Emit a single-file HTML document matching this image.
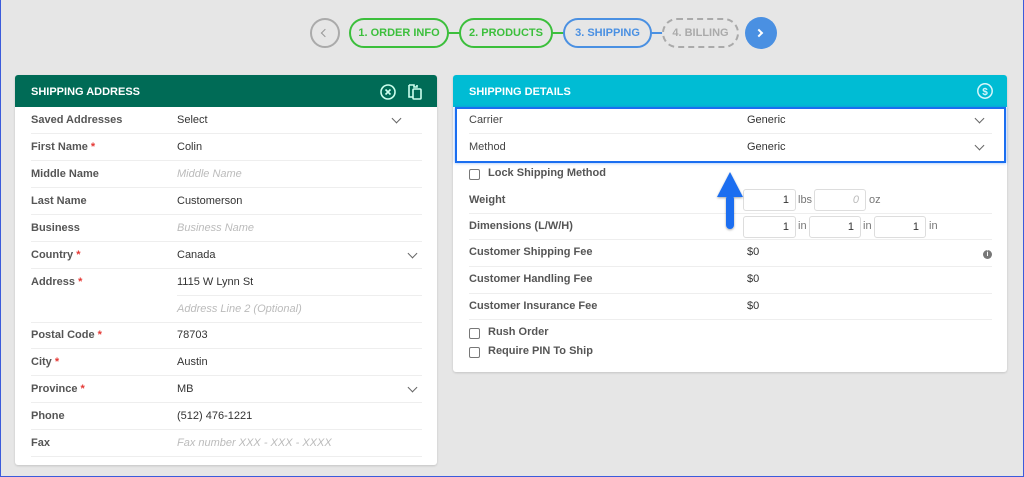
<!DOCTYPE html>
<html><head><meta charset="utf-8"><style>
*{box-sizing:border-box;margin:0;padding:0}
body{width:1024px;height:477px;background:#e6e6e6;font-family:"Liberation Sans",sans-serif;position:relative;overflow:hidden;font-size:11px;color:#333;white-space:nowrap}
.frame{position:absolute;left:0;top:0;width:1024px;height:477px;border:1px solid #3b5bdb;border-top:none;pointer-events:none;z-index:9}
.a{position:absolute}
.pill{position:absolute;top:18px;height:30px;border:2px solid #3cbf3c;border-radius:15px;color:#3cbf3c;font-weight:bold;font-size:11px;display:flex;align-items:center;justify-content:center;background:#e6e6e6}
.panel{position:absolute;background:#fff;border-radius:3px;box-shadow:0 1px 2px rgba(0,0,0,.15)}
.hd{position:absolute;left:0;top:0;right:0;height:32px;color:#fff;font-weight:bold;font-size:11px;padding:11px 0 0 16px;border-radius:3px 3px 0 0}
.lb{position:absolute;font-weight:bold;color:#555;font-size:11px}
.v{position:absolute;color:#333;font-size:11px}
.ph{color:#bbb;font-style:italic}
.sep{position:absolute;height:1px;background:#eee}
.req{color:#e53935}
.chev{position:absolute;width:7px;height:7px;border-right:1.3px solid #666;border-bottom:1.3px solid #666;transform:rotate(45deg)}
.box{position:absolute;border:1px solid #ddd;border-radius:3px;height:22px;text-align:right;padding:4px 6px 0 0;font-size:11px}
.cb{position:absolute;width:11px;height:11px;border:1.3px solid #777;border-radius:2px}
</style></head><body>
<div class="frame"></div>
<!-- stepper -->
<div class="a" style="left:310px;top:18px;width:30px;height:30px;border:2px solid #aaa;border-radius:50%"></div>
<div class="a" style="left:322px;top:30px;width:6px;height:6px;border-left:1.5px solid #999;border-bottom:1.5px solid #999;transform:rotate(45deg)"></div>
<div class="a" style="left:448px;top:32px;width:12px;height:2px;background:#3cbf3c"></div>
<div class="a" style="left:552px;top:32px;width:12px;height:2px;background:#3cbf3c"></div>
<div class="a" style="left:651px;top:32px;width:12px;height:2px;background:#4a90e2"></div>
<div class="pill" style="left:349px;width:100px">1. ORDER INFO</div>
<div class="pill" style="left:459px;width:94px">2. PRODUCTS</div>
<div class="pill" style="left:563px;width:89px;border-color:#4a90e2;color:#4a90e2">3. SHIPPING</div>
<div class="pill" style="left:662px;width:77px;border:2px dashed #aaa;color:#aaa">4. BILLING</div>
<div class="a" style="left:745px;top:17px;width:32px;height:32px;background:#4a90e2;border-radius:50%"></div>
<div class="a" style="left:756px;top:30px;width:6px;height:6px;border-right:2px solid #fff;border-top:2px solid #fff;transform:rotate(45deg)"></div>

<!-- left panel -->
<div class="panel" style="left:15px;top:75px;width:422px;height:390px">
<div class="hd" style="background:#006b56">SHIPPING ADDRESS</div>
<svg class="a" style="left:364px;top:8px" width="18" height="18" viewBox="0 0 18 18"><circle cx="9" cy="9" r="7" fill="none" stroke="#cfe" stroke-width="1.6"/><path d="M6.5 6.5l5 5M11.5 6.5l-5 5" stroke="#cfe" stroke-width="1.6"/></svg>
<svg class="a" style="left:391px;top:7px" width="18" height="20" viewBox="0 0 18 20"><path d="M3 3h5v2h3V3h0M3 3v12h4" fill="none" stroke="#cfe" stroke-width="1.6"/><rect x="7" y="7" width="8" height="10" rx="1" fill="none" stroke="#cfe" stroke-width="1.6"/></svg>
</div>
<div class="lb" style="left:31px;top:114px">Saved Addresses</div><div class="v" style="left:177px;top:114px">Select</div><div class="chev" style="left:393px;top:115px"></div>
<div class="sep" style="left:31px;top:133px;width:391px"></div>
<div class="lb" style="left:31px;top:141px">First Name <span class="req">*</span></div><div class="v" style="left:177px;top:141px">Colin</div>
<div class="sep" style="left:31px;top:160px;width:391px"></div>
<div class="lb" style="left:31px;top:168px">Middle Name</div><div class="v ph" style="left:177px;top:168px">Middle Name</div>
<div class="sep" style="left:31px;top:187px;width:391px"></div>
<div class="lb" style="left:31px;top:195px">Last Name</div><div class="v" style="left:177px;top:195px">Customerson</div>
<div class="sep" style="left:31px;top:214px;width:391px"></div>
<div class="lb" style="left:31px;top:222px">Business</div><div class="v ph" style="left:177px;top:222px">Business Name</div>
<div class="sep" style="left:31px;top:241px;width:391px"></div>
<div class="lb" style="left:31px;top:249px">Country <span class="req">*</span></div><div class="v" style="left:177px;top:249px">Canada</div><div class="chev" style="left:409px;top:250px"></div>
<div class="sep" style="left:31px;top:268px;width:391px"></div>
<div class="lb" style="left:31px;top:276px">Address <span class="req">*</span></div><div class="v" style="left:177px;top:276px">1115 W Lynn St</div>
<div class="sep" style="left:177px;top:295px;width:245px"></div>
<div class="v ph" style="left:177px;top:303px">Address Line 2 (Optional)</div>
<div class="sep" style="left:31px;top:322px;width:391px"></div>
<div class="lb" style="left:31px;top:329px">Postal Code <span class="req">*</span></div><div class="v" style="left:177px;top:329px">78703</div>
<div class="sep" style="left:31px;top:348px;width:391px"></div>
<div class="lb" style="left:31px;top:356px">City <span class="req">*</span></div><div class="v" style="left:177px;top:356px">Austin</div>
<div class="sep" style="left:31px;top:375px;width:391px"></div>
<div class="lb" style="left:31px;top:383px">Province <span class="req">*</span></div><div class="v" style="left:177px;top:383px">MB</div><div class="chev" style="left:409px;top:384px"></div>
<div class="sep" style="left:31px;top:402px;width:391px"></div>
<div class="lb" style="left:31px;top:410px">Phone</div><div class="v" style="left:177px;top:410px">(512) 476-1221</div>
<div class="sep" style="left:31px;top:429px;width:391px"></div>
<div class="lb" style="left:31px;top:437px">Fax</div><div class="v ph" style="left:177px;top:437px">Fax number XXX - XXX - XXXX</div>
<div class="sep" style="left:31px;top:456px;width:391px"></div>

<!-- right panel -->
<div class="panel" style="left:453px;top:75px;width:554px;height:297px">
<div class="hd" style="background:#00bcd4">SHIPPING DETAILS</div>
<svg class="a" style="left:523px;top:7px" width="18" height="18" viewBox="0 0 18 18"><circle cx="9" cy="9" r="7.2" fill="none" stroke="#d8f6fb" stroke-width="1.5"/><text x="9" y="13" font-size="10" font-weight="bold" text-anchor="middle" fill="#d8f6fb" font-family="Liberation Sans">$</text></svg>
</div>
<div class="a" style="left:455px;top:107px;width:551px;height:56px;border:2px solid #1a6ef0;box-shadow:0 0 3px rgba(26,110,240,.5)"></div>
<div class="lb" style="left:469px;top:114px;font-weight:normal;color:#444">Carrier</div><div class="v" style="left:747px;top:114px">Generic</div><div class="chev" style="left:976px;top:115px"></div>
<div class="sep" style="left:469px;top:133px;width:523px"></div>
<div class="lb" style="left:469px;top:141px;font-weight:normal;color:#444">Method</div><div class="v" style="left:747px;top:141px">Generic</div><div class="chev" style="left:976px;top:142px"></div>
<div class="cb" style="left:469px;top:169px"></div><div class="lb" style="left:488px;top:167px">Lock Shipping Method</div>
<div class="lb" style="left:469px;top:194px">Weight</div>
<div class="box" style="left:743px;top:189px;width:53px">1</div><div class="v" style="left:798px;top:194px;color:#777">lbs</div>
<div class="box ph" style="left:814px;top:189px;width:52px">0</div><div class="v" style="left:869px;top:194px;color:#777">oz</div>
<div class="sep" style="left:469px;top:213px;width:523px"></div>
<div class="lb" style="left:469px;top:220px">Dimensions (L/W/H)</div>
<div class="box" style="left:743px;top:216px;width:53px">1</div><div class="v" style="left:798px;top:220px;color:#777">in</div>
<div class="box" style="left:809px;top:216px;width:52px">1</div><div class="v" style="left:863px;top:220px;color:#777">in</div>
<div class="box" style="left:874px;top:216px;width:52px">1</div><div class="v" style="left:929px;top:220px;color:#777">in</div>
<div class="sep" style="left:469px;top:239px;width:523px"></div>
<div class="lb" style="left:469px;top:246px">Customer Shipping Fee</div><div class="v" style="left:747px;top:246px">$0</div>
<div class="a" style="left:983px;top:250px;width:9px;height:9px;border-radius:50%;background:#777;color:#fff;font-size:7px;font-weight:bold;text-align:center;line-height:9px">i</div>
<div class="sep" style="left:469px;top:266px;width:523px"></div>
<div class="lb" style="left:469px;top:273px">Customer Handling Fee</div><div class="v" style="left:747px;top:273px">$0</div>
<div class="sep" style="left:469px;top:293px;width:523px"></div>
<div class="lb" style="left:469px;top:300px">Customer Insurance Fee</div><div class="v" style="left:747px;top:300px">$0</div>
<div class="sep" style="left:469px;top:319px;width:523px"></div>
<div class="cb" style="left:469px;top:328px"></div><div class="lb" style="left:488px;top:326px">Rush Order</div>
<div class="cb" style="left:469px;top:347px"></div><div class="lb" style="left:488px;top:345px">Require PIN To Ship</div>

<!-- arrow -->
<svg class="a" style="left:712px;top:168px" width="36" height="66" viewBox="0 0 36 66"><defs><filter id="s"><feDropShadow dx="0" dy="1" stdDeviation="1" flood-opacity=".35"/></filter></defs><g filter="url(#s)" fill="#1a6ef0"><path d="M18 4L31 29H5Z"/><rect x="14" y="27" width="8" height="34" rx="4"/></g></svg>
</body></html>
